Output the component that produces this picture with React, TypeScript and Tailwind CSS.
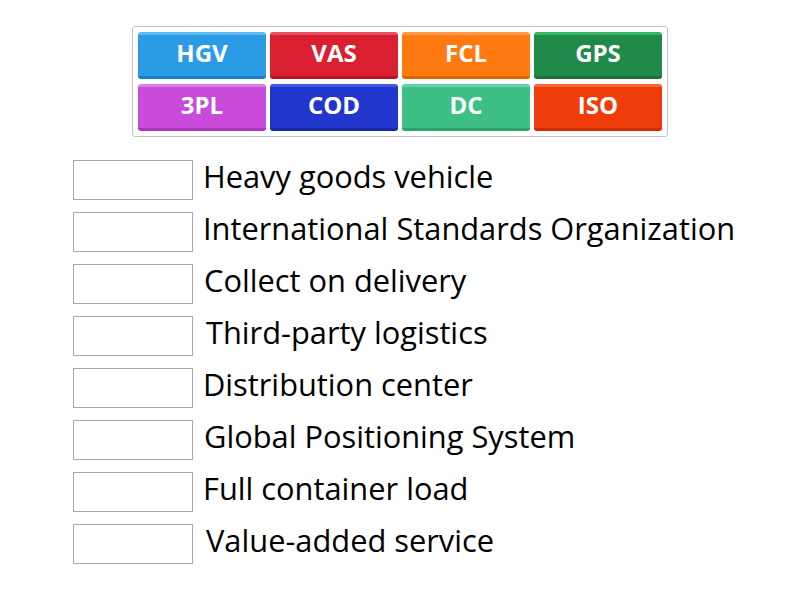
import React from "react";

const tiles = [
  { label: "HGV", cls: "bg-[#2b9be6] border-t-[#5cbaf1] border-b-[#1a7fc9]" },
  { label: "VAS", cls: "bg-[#d91f30] border-t-[#e85260] border-b-[#b81424]" },
  { label: "FCL", cls: "bg-[#ff7b12] border-t-[#ff9a4a] border-b-[#e06400]" },
  { label: "GPS", cls: "bg-[#1f8a49] border-t-[#36b666] border-b-[#17703a]" },
  { label: "3PL", cls: "bg-[#c94bd9] border-t-[#da7ce6] border-b-[#ad33bd]" },
  { label: "COD", cls: "bg-[#2036cc] border-t-[#4257e0] border-b-[#1828a8]" },
  { label: "DC", cls: "bg-[#3ebf86] border-t-[#63d3a1] border-b-[#2ea370]" },
  { label: "ISO", cls: "bg-[#ee3d0b] border-t-[#f76534] border-b-[#d02e00]" },
];

const rows = [
  { text: "Heavy goods vehicle", ml: "ml-[10px]" },
  { text: "International Standards Organization", ml: "ml-[10px]" },
  { text: "Collect on delivery", ml: "ml-[11px]" },
  { text: "Third-party logistics", ml: "ml-[13px]" },
  { text: "Distribution center", ml: "ml-[10px]" },
  { text: "Global Positioning System", ml: "ml-[11px]" },
  { text: "Full container load", ml: "ml-[10px]" },
  { text: "Value-added service", ml: "ml-[13px]" },
];

export default function App() {
  return (
    <div className="w-[800px] h-[600px] bg-white font-['Open_Sans',sans-serif]">
      <div className="pt-[26px] flex justify-center">
        <div className="w-[536px] h-[111px] border border-[#c4c4c4] rounded-[3px] p-[5px] grid grid-cols-4 gap-x-[4px] gap-y-[5px]">
          {tiles.map((t) => (
            <div
              key={t.label}
              className={`h-[47px] rounded-[3px] border-t-[3px] border-b-[3px] flex items-center justify-center text-white text-[24px] leading-none font-bold ${t.cls}`}
            >
              <span className="-mt-[6px]">{t.label}</span>
            </div>
          ))}
        </div>
      </div>
      <div className="mt-[23px] pl-[73px] flex flex-col gap-[12px]">
        {rows.map((r) => (
          <div key={r.text} className="flex items-center h-[40px]">
            <div className="w-[120px] h-[40px] border border-[#a8a8a8] shrink-0" />
            <span className={`text-[30.8px] leading-none text-black -mt-[8px] whitespace-nowrap ${r.ml}`}>{r.text}</span>
          </div>
        ))}
      </div>
    </div>
  );
}
